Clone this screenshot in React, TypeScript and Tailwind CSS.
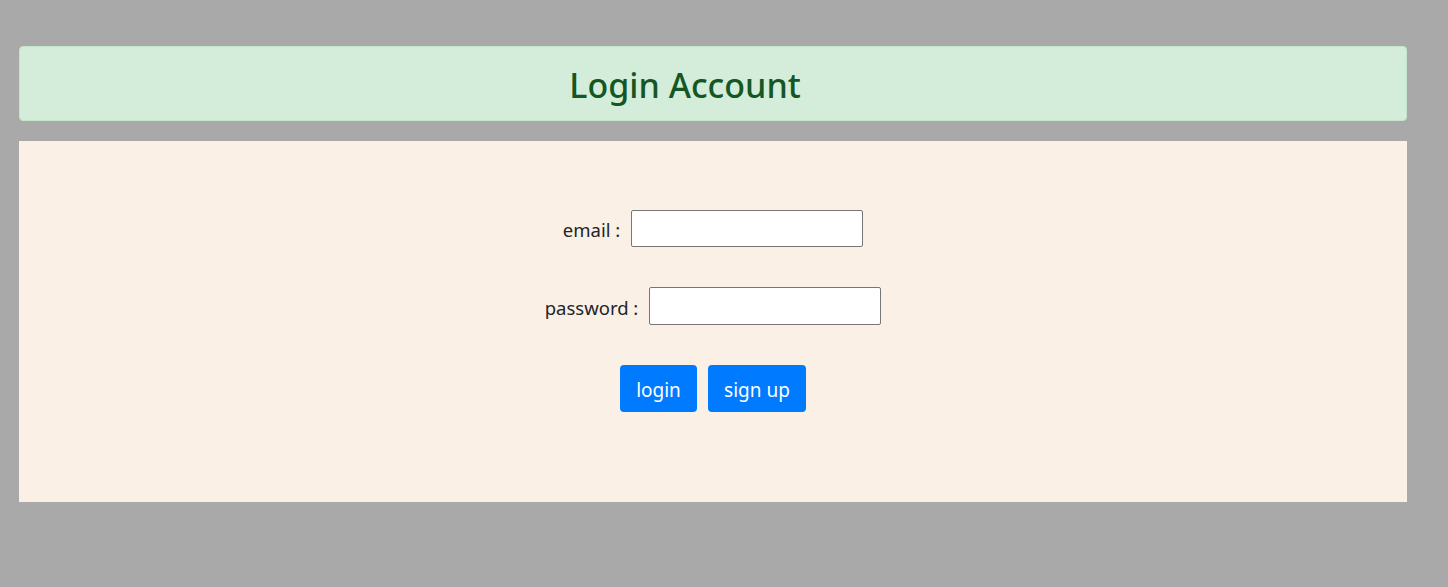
import React from "react";

const LoginPage: React.FC = () => {
  return (
    <div className="min-h-[587px] w-full bg-[#a9a9a9] pt-[46px] pl-[19px] font-['Noto_Sans',sans-serif]">
      <div className="w-[1388px]">
        <div className="flex h-[75px] items-center justify-center rounded-[4px] border border-[#c3e6cb] bg-[#d4edda] pr-[56px]">
          <h2 className="pt-[2px] text-[34px] font-medium leading-none text-[#155724]">
            Login Account
          </h2>
        </div>

        <div className="mt-[20px] flex h-[361px] flex-col items-center bg-[#faf0e6] pt-[69px]">
          <div className="flex items-center gap-[11px]">
            <label className="pt-[3px] text-[18.5px] text-[#212529]">email :</label>
            <input
              type="email"
              className="h-[37px] w-[232px] rounded-[2px] border border-[#767676] bg-white"
            />
          </div>
          <div className="mt-[40px] flex items-center gap-[11px]">
            <label className="pt-[3px] text-[18.5px] text-[#212529]">password :</label>
            <input
              type="password"
              className="h-[38px] w-[232px] rounded-[2px] border border-[#767676] bg-white"
            />
          </div>
          <div className="mt-[40px] flex gap-[11px]">
            <button className="h-[47px] w-[77px] rounded-[4px] bg-[#007bff] pt-[3px] text-[19px] text-white">
              login
            </button>
            <button className="h-[47px] w-[98px] rounded-[4px] bg-[#007bff] pt-[3px] text-[19px] text-white">
              sign up
            </button>
          </div>
        </div>
      </div>
    </div>
  );
};

export default function App() {
  return <LoginPage />;
}
